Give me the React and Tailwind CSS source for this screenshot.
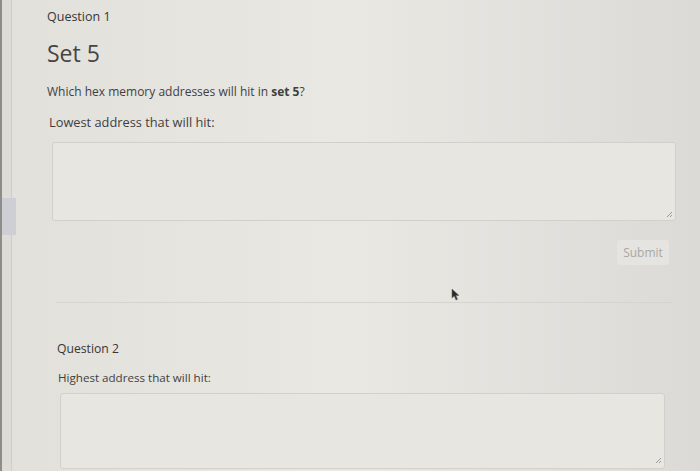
import React from "react";

function Cursor() {
  return (
    <svg className="absolute left-[451px] top-[288px]" width="9" height="13" viewBox="0 0 9 13">
      <path d="M1 1 L1 10 L3.3 8 L5 12 L6.5 11.3 L4.9 7.5 L8 7.5 Z" fill="#2b2b2b" stroke="#6b6b6b" strokeWidth="0.6" />
    </svg>
  );
}

export default function App() {
  return (
    <div
      className="relative flex w-[700px] h-[471px] overflow-hidden bg-gradient-to-r from-[#e2e0db] via-[#eae8e3] to-[#dcdad6]"
      style={{ fontFamily: '"Open Sans", "Noto Sans", sans-serif' }}
    >
      {/* left edge */}
      <div className="w-[2px] shrink-0 bg-[#8e8d8a]" />
      <div className="w-[10px] shrink-0 flex flex-col border-r border-[#cfcdc8] bg-[#dedcd7]">
        <div className="h-[198px]" />
        <div className="h-[37px] w-[14px] bg-[#cdcfd4]" />
      </div>

      {/* content */}
      <div className="flex-1 pl-[35px] pr-[24px]">
        <div className="pt-[8px] text-[12.5px] leading-[18px] text-[#363636]">Question 1</div>
        <div className="mt-[11px] text-[23px] leading-[32px] text-[#454545]">Set 5</div>
        <div className="mt-[14px] text-[12px] leading-[18px] text-[#3f3f3f]">
          Which hex memory addresses will hit in <span className="font-bold">set 5</span>?
        </div>
        <div className="mt-[12px] ml-[2px] text-[12.8px] leading-[18px] text-[#3f3f3f]">
          Lowest address that will hit:
        </div>
        <div className="relative mt-[11px] ml-[5px] w-[624px] h-[79px] rounded-[3px] border border-[#d2d0cb] bg-[#e8e6e1]">
          <svg className="absolute right-[2px] bottom-[2px]" width="7" height="7" viewBox="0 0 7 7">
            <path d="M6 1 L1 6 M6 4 L4 6" stroke="#8a8985" strokeWidth="0.8" />
          </svg>
        </div>
        <div className="mt-[19px] flex justify-end pr-[7px]">
          <div className="w-[52px] h-[25px] flex items-center justify-center rounded-[3px] bg-[#e5e4e0] text-[12px] text-[#a9a8a4]">
            Submit
          </div>
        </div>
        <div className="mt-[37px] ml-[9px] mr-[4px] h-px bg-[#d6d4cf]" />

        <div className="pl-[10px]">
          <div className="mt-[37px] text-[12.2px] leading-[18px] text-[#363636]">Question 2</div>
          <div className="mt-[11px] ml-[1px] text-[11.6px] leading-[18px] text-[#3f3f3f]">
            Highest address that will hit:
          </div>
          <div className="relative mt-[6px] ml-[3px] w-[605px] h-[76px] rounded-[3px] border border-[#d2d0cb] bg-[#e8e6e1]">
            <svg className="absolute right-[2px] bottom-[4px]" width="7" height="7" viewBox="0 0 7 7">
              <path d="M6 1 L1 6 M6 4 L4 6" stroke="#8a8985" strokeWidth="0.8" />
            </svg>
          </div>
        </div>
      </div>

      <Cursor />
    </div>
  );
}
